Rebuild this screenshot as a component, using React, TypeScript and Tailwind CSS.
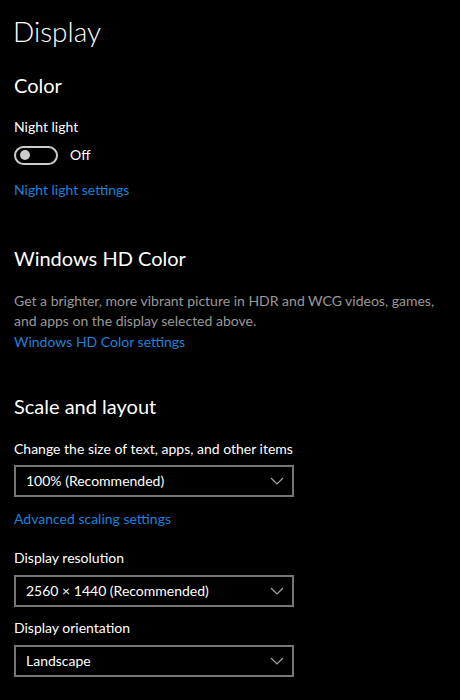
import React from "react";

const Chevron = () => (
  <svg width="14" height="8" viewBox="0 0 14 8" fill="none">
    <path d="M1 1 L7 7 L13 1" stroke="#a6a6a6" strokeWidth="1.2" />
  </svg>
);

const Select = ({ value, className }: { value: string; className: string }) => (
  <div className={`w-[280px] h-[32px] border-2 border-[#767676] flex items-center justify-between pl-[10px] pr-[8px] ${className}`}>
    <span className="text-[14px] leading-[20px] text-white">{value}</span>
    <Chevron />
  </div>
);

export default function App() {
  return (
    <div
      className="w-[460px] h-[700px] bg-black text-white overflow-hidden pl-[14px] pt-[13px] flex flex-col items-start"
      style={{ fontFamily: 'Lato, "Noto Sans", sans-serif' }}
    >
      <h1 className="text-[28px] leading-[36px] font-light -ml-[1px]">Display</h1>
      <h2 className="text-[20px] leading-[28px] mt-[22px]">Color</h2>
      <div className="text-[14px] leading-[20px] mt-[18px]">Night light</div>
      <div className="flex items-center mt-[8px]">
        <div className="w-[44px] h-[19px] rounded-full border-2 border-[#cccccc] flex items-center pl-[4px]">
          <div className="w-[10px] h-[10px] rounded-full bg-[#cccccc]" />
        </div>
        <span className="text-[14px] leading-[20px] ml-[12px]">Off</span>
      </div>
      <div className="text-[14px] leading-[20px] text-[#1c82dc] mt-[15px]">Night light settings</div>

      <h2 className="text-[20px] leading-[28px] mt-[44px]">Windows HD Color</h2>
      <p className="text-[14px] leading-[20px] text-[#999999] mt-[19px] pr-[16px]">
        Get a brighter, more vibrant picture in HDR and WCG videos, games, and apps on the display selected above.
      </p>
      <div className="text-[14px] leading-[20px] text-[#1c82dc] mt-[1px]">Windows HD Color settings</div>

      <h2 className="text-[20px] leading-[28px] mt-[40px]">Scale and layout</h2>
      <div className="text-[14px] leading-[20px] mt-[19px]">Change the size of text, apps, and other items</div>
      <Select value="100% (Recommended)" className="mt-[6px]" />
      <div className="text-[14px] leading-[20px] text-[#1c82dc] mt-[12px]">Advanced scaling settings</div>
      <div className="text-[14px] leading-[20px] mt-[19px]">Display resolution</div>
      <Select value="2560 × 1440 (Recommended)" className="mt-[7px]" />
      <div className="text-[14px] leading-[20px] mt-[11px]">Display orientation</div>
      <Select value="Landscape" className="mt-[7px]" />
    </div>
  );
}
